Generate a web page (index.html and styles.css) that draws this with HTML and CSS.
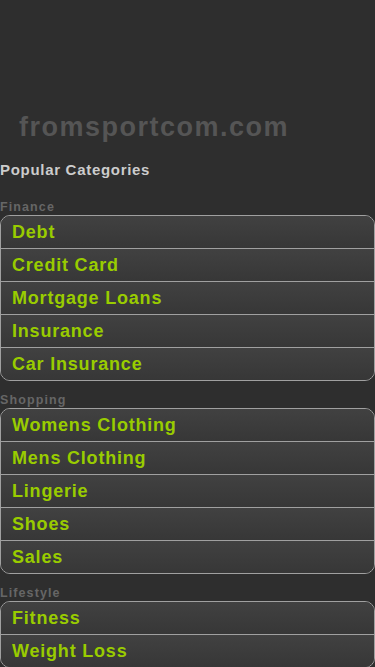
FILE: index.html
```html
<!DOCTYPE html>
<html lang="en">
<head>
  <meta charset="UTF-8">
  <meta name="viewport" content="width=device-width, initial-scale=1.0">
  <title>fromsportcom.com</title>
  <link rel="stylesheet" href="styles.css">
</head>
<body>
  <!-- Header -->
  <header class="site-header">
    <h1 class="logo">fromsportcom.com</h1>
  </header>

  <h2 class="page-title">Popular Categories</h2>

  <!-- Finance -->
  <section class="category">
    <h3 class="category-label">Finance</h3>
    <ul class="category-list">
      <li><a href="#">Debt</a></li>
      <li><a href="#">Credit Card</a></li>
      <li><a href="#">Mortgage Loans</a></li>
      <li><a href="#">Insurance</a></li>
      <li><a href="#">Car Insurance</a></li>
    </ul>
  </section>

  <!-- Shopping -->
  <section class="category">
    <h3 class="category-label">Shopping</h3>
    <ul class="category-list">
      <li><a href="#">Womens Clothing</a></li>
      <li><a href="#">Mens Clothing</a></li>
      <li><a href="#">Lingerie</a></li>
      <li><a href="#">Shoes</a></li>
      <li><a href="#">Sales</a></li>
    </ul>
  </section>

  <!-- Lifestyle -->
  <section class="category">
    <h3 class="category-label">Lifestyle</h3>
    <ul class="category-list">
      <li><a href="#">Fitness</a></li>
      <li><a href="#">Weight Loss</a></li>
    </ul>
  </section>
</body>
</html>
```

FILE: styles.css
```css
/* General Styles */
body {
  font-family: 'Liberation Sans', Arial, sans-serif;
  background: #2e2e2e;
  color: #fff;
  margin: 0;
  padding: 0;
}

/* Header */
.site-header {
  padding: 112px 0 0 19px;
  height: 36px;
}

.logo {
  margin: 0;
  font-size: 27px;
  line-height: 30px;
  font-weight: bold;
  letter-spacing: 1.5px;
  color: #555;
}

.page-title {
  margin: 13px 0 0;
  font-size: 15px;
  line-height: 18px;
  font-weight: bold;
  letter-spacing: 0.7px;
  color: #ccc;
}

/* Categories */
.category {
  margin-top: 22px;
}

.category + .category {
  margin-top: 13px;
}

.category-label {
  margin: 0;
  font-size: 12.5px;
  line-height: 12px;
  font-weight: bold;
  letter-spacing: 1.1px;
  color: #666;
  padding-bottom: 2px;
}

.category-list {
  list-style: none;
  margin: 0;
  padding: 0;
  border: 1px solid #a0a0a0;
  border-radius: 10px;
  overflow: hidden;
}

.category-list li {
  border-top: 1px solid #a0a0a0;
  background: linear-gradient(#414141, #373737);
}

.category-list li:first-child {
  border-top: none;
}

.category-list a {
  display: block;
  padding: 0 11px;
  height: 32px;
  line-height: 32px;
  font-size: 18px;
  font-weight: bold;
  letter-spacing: 0.8px;
  color: #99cc00;
  text-decoration: none;
}
```
